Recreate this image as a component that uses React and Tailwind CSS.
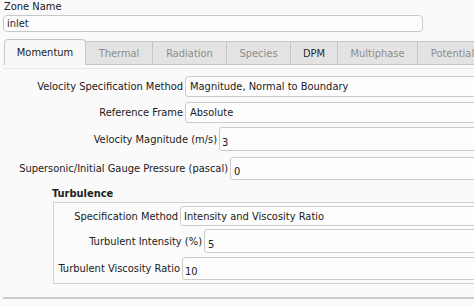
import React from "react";

const tabs = [
  { name: "Thermal", w: 67, dark: false },
  { name: "Radiation", w: 74, dark: false },
  { name: "Species", w: 64, dark: false },
  { name: "DPM", w: 47, dark: true },
  { name: "Multiphase", w: 80, dark: false },
  { name: "Potential", w: 70, dark: false },
];

function Row({ label, labelW, value, h, mt, pt = 0, pl = 4 }) {
  return (
    <div className="flex items-center w-[480px]" style={{ marginTop: mt }}>
      <div className="text-right pr-[2px] whitespace-nowrap text-[#202020]" style={{ width: labelW }}>
        {label}
      </div>
      <div
        className="flex-1 border border-[#cbcbcb] rounded-[3px] bg-[#fdfdfd] text-[#202020] flex"
        style={{ height: h, paddingTop: pt, paddingLeft: pl, alignItems: pt ? "flex-start" : "center" }}
      >
        {value}
      </div>
    </div>
  );
}

export default function App() {
  return (
    <div
      className="w-[474px] h-[306px] overflow-hidden bg-[#fafafa] text-[11px] leading-[13px] text-[#1e1e1e]"
      style={{ fontFamily: '"DejaVu Sans Condensed", "DejaVu Sans", Verdana, sans-serif', fontStretch: "condensed" }}
    >
      <div className="pl-[4px] h-[14px] leading-[14px] text-[#202020]">Zone Name</div>
      <div className="mt-[1px] ml-[3px] w-[420px] h-[17px] border border-[#c8c8c8] rounded-[4px] bg-[#fdfdfd] pl-[3px] flex items-center">
        inlet
      </div>

      <div className="mt-[7px] flex h-[26px] w-[520px]">
        <div className="ml-[4px] w-[82px] h-[26px] border border-b-0 border-[#c6c6c6] rounded-t-[4px] bg-[#f7f7f7] flex items-center justify-center text-[#222]">
          Momentum
        </div>
        {tabs.map((t) => (
          <div
            key={t.name}
            className={`mt-[2px] h-[24px] border-t border-r border-b border-[#c6c6c6] bg-[#e3e3e3] flex items-center justify-center ${
              t.dark ? "text-[#2a2a2a]" : "text-[#8d8d8d]"
            }`}
            style={{ width: t.w }}
          >
            {t.name}
          </div>
        ))}
      </div>
      <div className="mt-[3px] h-[1px] bg-[#e6e6e6] ml-[3px]" />

      <Row label="Velocity Specification Method" labelW={185} value="Magnitude, Normal to Boundary" h={21} mt={7} pl={4} />
      <Row label="Reference Frame" labelW={185} value="Absolute" h={21} mt={5} pl={4} />
      <Row label="Velocity Magnitude (m/s)" labelW={219} value="3" h={24} mt={4} pt={8} pl={2} />
      <Row label="Supersonic/Initial Gauge Pressure (pascal)" labelW={230} value="0" h={23} mt={6} pt={7} pl={3} />

      <div className="ml-[52px] mt-[7px] h-[14px] leading-[14px] font-bold text-[#222]">Turbulence</div>
      <div className="ml-[53px] mt-[1px] w-[440px] h-[82px] border border-[#d2d2d2] bg-[#fbfbfb] pt-[3px]">
        <Row label="Specification Method" labelW={126} value="Intensity and Viscosity Ratio" h={20} mt={0} pl={3} />
        <Row label="Turbulent Intensity (%)" labelW={150} value="5" h={24} mt={3} pt={8} pl={3} />
        <Row label="Turbulent Viscosity Ratio" labelW={128} value="10" h={23} mt={4} pt={7} pl={2} />
      </div>
      <div className="mt-[13px] ml-[3px] h-[2px] bg-[#c9c9c9]" />
    </div>
  );
}
